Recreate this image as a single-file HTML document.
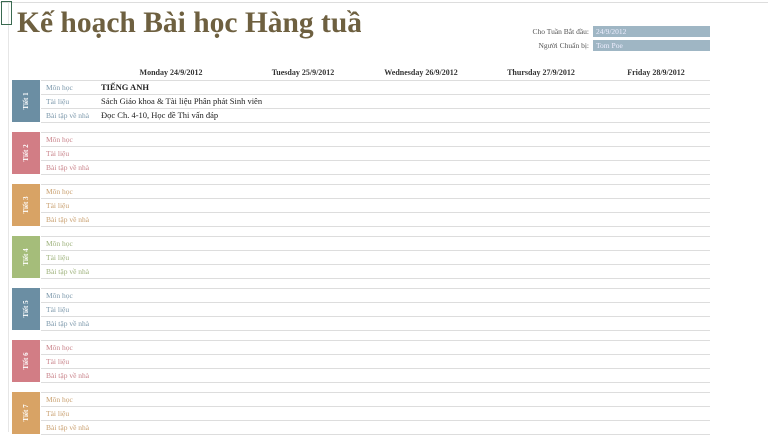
<!DOCTYPE html>
<html><head><meta charset="utf-8"><style>
body{margin:0;width:768px;height:432px;overflow:hidden;background:#fff;font-family:"Liberation Serif",serif;position:relative}
.a{position:absolute}
.title{left:17px;top:7px;width:344px;overflow:hidden;font-size:29.5px;font-weight:bold;color:#6e6040;white-space:nowrap}
.day{top:68px;font-size:8px;font-weight:bold;color:#333;width:130px;text-align:center}
.lab{font-size:7.5px;color:#555}
.box{height:11px;background:#9fb6c4;color:#eef;font-size:7.5px;line-height:11px;padding-left:3px;width:114px;left:593px}
.blk{position:absolute;left:12px;width:698px;height:42px}
.tab{position:absolute;left:0;top:0;width:28px;height:42px}
.tab span{position:absolute;left:14px;top:21px;transform:translate(-50%,-50%) rotate(-90deg);color:#fff;font-size:7px;font-weight:bold;white-space:nowrap}
.row{position:absolute;left:29px;right:0;height:13px;border-top:1px solid #ddd;font-size:7.5px;line-height:13px}
.row b{position:absolute;left:5px;font-weight:normal}
.row i{position:absolute;left:60px;font-style:normal;color:#222;font-size:8.5px}
</style></head><body>
<div class="a" style="left:0;top:2px;width:768px;border-top:1px solid #ddd"></div>
<div class="a" style="left:8px;top:2px;height:430px;border-left:1px solid #e6e6e6"></div>
<div class="a" style="left:1px;top:1px;width:9px;height:22px;border:1px solid #3a6a50"></div>
<div class="a title">Kế hoạch Bài học Hàng tuần</div>
<div class="a lab" style="left:500px;top:27px;width:89px;text-align:right">Cho Tuần Bắt đầu:</div>
<div class="a lab" style="left:500px;top:41px;width:89px;text-align:right">Người Chuẩn bị:</div>
<div class="a box" style="top:26px">24/9/2012</div>
<div class="a box" style="top:40px">Tom Poe</div>
<div class="a day" style="left:106px">Monday 24/9/2012</div>
<div class="a day" style="left:238px">Tuesday 25/9/2012</div>
<div class="a day" style="left:356px">Wednesday 26/9/2012</div>
<div class="a day" style="left:476px">Thursday 27/9/2012</div>
<div class="a day" style="left:591px">Friday 28/9/2012</div>

<div class="blk" style="top:80px"><div class="tab" style="background:#6b8ea3"><span>Tiết 1</span></div>
<div class="row" style="top:0;color:#7c98ab"><b>Môn học</b><i style="font-weight:bold">TIẾNG ANH</i></div>
<div class="row" style="top:14px;color:#7c98ab"><b>Tài liệu</b><i>Sách Giáo khoa &amp; Tài liệu Phân phát Sinh viên</i></div>
<div class="row" style="top:28px;color:#7c98ab;border-bottom:1px solid #ddd"><b>Bài tập về nhà</b><i>Đọc Ch. 4-10, Học đề Thi vấn đáp</i></div></div>

<div class="blk" style="top:132px"><div class="tab" style="background:#d27d85"><span>Tiết 2</span></div>
<div class="row" style="top:0;color:#c9848b"><b>Môn học</b></div><div class="row" style="top:14px;color:#c9848b"><b>Tài liệu</b></div><div class="row" style="top:28px;color:#c9848b;border-bottom:1px solid #ddd"><b>Bài tập về nhà</b></div></div>

<div class="blk" style="top:184px"><div class="tab" style="background:#d8a365"><span>Tiết 3</span></div>
<div class="row" style="top:0;color:#c9a070"><b>Môn học</b></div><div class="row" style="top:14px;color:#c9a070"><b>Tài liệu</b></div><div class="row" style="top:28px;color:#c9a070;border-bottom:1px solid #ddd"><b>Bài tập về nhà</b></div></div>

<div class="blk" style="top:236px"><div class="tab" style="background:#a5bd7a"><span>Tiết 4</span></div>
<div class="row" style="top:0;color:#9eb27c"><b>Môn học</b></div><div class="row" style="top:14px;color:#9eb27c"><b>Tài liệu</b></div><div class="row" style="top:28px;color:#9eb27c;border-bottom:1px solid #ddd"><b>Bài tập về nhà</b></div></div>

<div class="blk" style="top:288px"><div class="tab" style="background:#6b8ea3"><span>Tiết 5</span></div>
<div class="row" style="top:0;color:#7c98ab"><b>Môn học</b></div><div class="row" style="top:14px;color:#7c98ab"><b>Tài liệu</b></div><div class="row" style="top:28px;color:#7c98ab;border-bottom:1px solid #ddd"><b>Bài tập về nhà</b></div></div>

<div class="blk" style="top:340px"><div class="tab" style="background:#d27d85"><span>Tiết 6</span></div>
<div class="row" style="top:0;color:#c9848b"><b>Môn học</b></div><div class="row" style="top:14px;color:#c9848b"><b>Tài liệu</b></div><div class="row" style="top:28px;color:#c9848b;border-bottom:1px solid #ddd"><b>Bài tập về nhà</b></div></div>

<div class="blk" style="top:392px"><div class="tab" style="background:#d8a365"><span>Tiết 7</span></div>
<div class="row" style="top:0;color:#c9a070"><b>Môn học</b></div><div class="row" style="top:14px;color:#c9a070"><b>Tài liệu</b></div><div class="row" style="top:28px;color:#c9a070;border-bottom:1px solid #ddd"><b>Bài tập về nhà</b></div></div>
</body></html>
